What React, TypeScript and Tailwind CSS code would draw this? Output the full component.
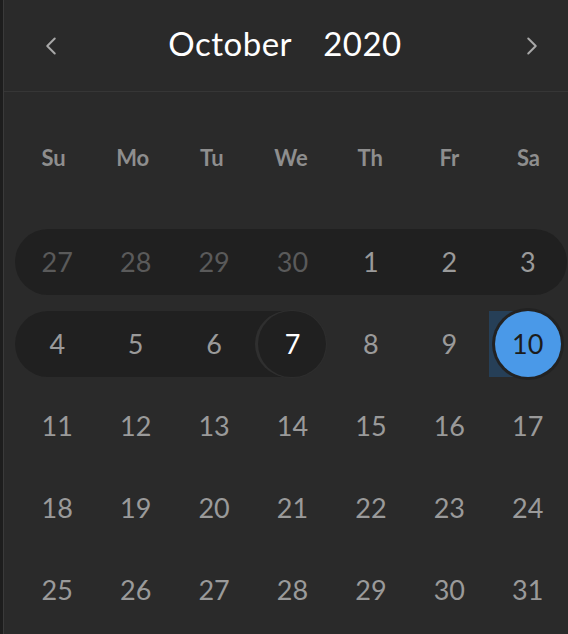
import { ChevronLeft, ChevronRight } from "lucide-react";

type Day = {
  label: number;
  muted?: boolean;
};

const weekdays = ["Su", "Mo", "Tu", "We", "Th", "Fr", "Sa"];

const rows: Day[][] = [
  [{ label: 27, muted: true }, { label: 28, muted: true }, { label: 29, muted: true }, { label: 30, muted: true }, { label: 1 }, { label: 2 }, { label: 3 }],
  [{ label: 4 }, { label: 5 }, { label: 6 }, { label: 7 }, { label: 8 }, { label: 9 }, { label: 10 }],
  [{ label: 11 }, { label: 12 }, { label: 13 }, { label: 14 }, { label: 15 }, { label: 16 }, { label: 17 }],
  [{ label: 18 }, { label: 19 }, { label: 20 }, { label: 21 }, { label: 22 }, { label: 23 }, { label: 24 }],
  [{ label: 25 }, { label: 26 }, { label: 27 }, { label: 28 }, { label: 29 }, { label: 30 }, { label: 31 }],
];

// week row index -> range of highlighted columns [from, to]
const ranges: Record<number, [number, number]> = {
  0: [0, 6],
  1: [0, 3],
};

const DayCell = ({ day, row, col }: { day: Day; row: number; col: number }) => {
  const range = ranges[row];
  const inRange = range && col >= range[0] && col <= range[1];
  const isStart = range && col === range[0];
  const isEnd = range && col === range[1];
  const isRangeEnd = row === 1 && col === 3;
  const isToday = row === 1 && col === 6;

  if (isRangeEnd) {
    return (
      <div className="h-[66px] flex items-center justify-center bg-[linear-gradient(to_right,#202020_50%,transparent_50%)]">
        <div className="w-[68px] h-[66px] rounded-full bg-[#202020] shadow-[-3px_0_0_0_#2f2f2f,0_0_0_1px_#2e2e2e] flex items-center justify-center text-white text-[27px]">
          {day.label}
        </div>
      </div>
    );
  }

  if (isToday) {
    return (
      <div className="h-[66px] flex items-center justify-center bg-[linear-gradient(to_right,#263f57_46%,transparent_46%)]">
        <div className="w-[66px] h-[66px] rounded-full bg-[#4a99e8] shadow-[0_0_0_3px_#222] flex items-center justify-center text-[#1c1c1c] text-[27px]">
          {day.label}
        </div>
      </div>
    );
  }

  return (
    <div
      className={
        "h-[66px] flex items-center justify-center text-[27px] " +
        (inRange ? "bg-[#202020] " : "") +
        (isStart ? "rounded-l-full ml-[-3px] pl-[3px] " : "") +
        (isEnd ? "rounded-r-full " : "") +
        (day.muted ? "text-[#5a5a5a]" : "text-[#9a9a9a]")
      }
    >
      {day.label}
    </div>
  );
};

export default function App() {
  return (
    <div className="w-[568px] h-[634px] bg-[#2a2a2a] flex overflow-hidden font-['Lato',sans-serif]">
      <div className="w-[4px] bg-[#1d1d1d] border-r border-[#3a3a3a] shrink-0" />
      <div className="flex-1 flex flex-col">
        <header className="h-[92px] grid grid-cols-[90px_1fr_90px] items-center border-b border-[#363636]">
          <ChevronLeft className="w-[30px] h-[30px] text-[#a8a8a8] ml-[32px]" strokeWidth={1.6} />
          <h1 className="text-white text-[33px] text-center tracking-[0.5px] pb-[4px] ml-[-2px]">
            October<span className="inline-block w-[31px]" />2020
          </h1>
          <ChevronRight className="w-[30px] h-[30px] text-[#a8a8a8] ml-[39px]" strokeWidth={1.6} />
        </header>

        <div className="pt-[47px]">
          <div className="grid grid-cols-7 h-[36px] items-center pl-[10px]">
            {weekdays.map((w) => (
              <div key={w} className="text-center text-[22px] font-bold text-[#8e8e8e]">
                {w}
              </div>
            ))}
          </div>

          <div className="mt-[54px] flex flex-col gap-[16px] pl-[14px] pr-[1px]">
            {rows.map((week, r) => (
              <div key={r} className="grid grid-cols-7">
                {week.map((day, c) => (
                  <DayCell key={c} day={day} row={r} col={c} />
                ))}
              </div>
            ))}
          </div>
        </div>
      </div>
    </div>
  );
}
